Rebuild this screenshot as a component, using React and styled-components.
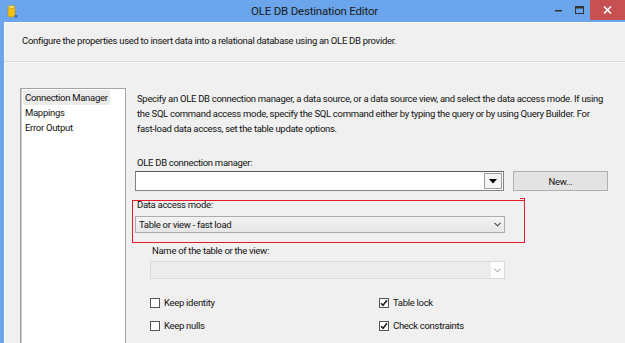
import React from 'react'
import styled, { createGlobalStyle } from 'styled-components';

const Global = createGlobalStyle`
   body {
      margin: 0;
      font-family: Roboto, "Liberation Sans", sans-serif;
      color: #111;
   }
`

const Window = styled.div`
   width: 625px;
   height: 343px;
   overflow: hidden;
   display: flex;
   flex-direction: column;
   background: #f0f0f0;
   font-size: 9.5px;
   letter-spacing: -0.3px;
`

const TitleBar = styled.div`
   height: 22px;
   flex: none;
   display: grid;
   grid-template-columns: 1fr auto 1fr;
   align-items: center;
   background: #6ba6ec;
`

const TitleIcon = styled.div`
   padding-left: 7px;
   display: flex;
   align-items: center;
`

const Title = styled.div`
   font-size: 11.5px;
   letter-spacing: -0.2px;
   color: #1a1a1a;
   padding-left: 4px;
`

const Controls = styled.div`
   display: flex;
   justify-content: flex-end;
   align-self: start;
`

const CtrlButton = styled.div`
   width: ${({ wide }) => (wide ? '35px' : '21px')};
   height: 20px;
   display: flex;
   align-items: center;
   justify-content: center;
   background: ${({ danger }) => (danger ? '#c75050' : 'transparent')};
`

const Frame = styled.div`
   flex: 1;
   min-height: 0;
   display: flex;
   flex-direction: column;
   border-left: 4px solid #6ba6ec;
   box-shadow: inset 1px 1px 0 #fbfbfb;
`

const Header = styled.div`
   height: 40px;
   flex: none;
   box-sizing: border-box;
   padding: 11px 0 0 18px;
   line-height: 15px;
   border-bottom: 1px solid #d8d8d8;
`

const Main = styled.div`
   flex: 1;
   min-height: 0;
   display: flex;
   padding: 25px 0 0 16px;
   border-top: 1px solid #fafafa;
`

const Nav = styled.div`
   width: 106px;
   box-sizing: border-box;
   height: 300px;
   flex: none;
   display: flex;
   flex-direction: column;
   align-items: flex-start;
   padding: 1px 2px;
   background: #fff;
   border: 1px solid #a3a3a3;
   box-shadow: inset 1px 0 0 #c9c9c9;
`

const NavItem = styled.div`
   padding: 0 2px;
   line-height: 15px;
   white-space: nowrap;
   background: ${({ active }) => (active ? '#ececec' : 'transparent')};
`

const Content = styled.div`
   margin-left: 6px;
   padding-top: 3px;
   display: flex;
   flex-direction: column;
   align-items: flex-start;
`

const Description = styled.div`
   padding-left: 5px;
   line-height: 15px;
   white-space: nowrap;
`

const Line = styled.span`
   display: block;
`

const Label = styled.div`
   margin-top: ${({ top }) => top || 0}px;
   padding-left: ${({ indent }) => indent || 5}px;
   line-height: 15px;
   white-space: nowrap;
`

const ComboRow = styled.div`
   margin: 1px 0 0 3px;
   display: flex;
   align-items: center;
`

const Combo = styled.div`
   width: 369px;
   height: 20px;
   box-sizing: border-box;
   display: flex;
   justify-content: flex-end;
   align-items: center;
   padding-right: 1px;
   background: #fff;
   border: 1px solid #828282;
   border-top-color: #5a5a5a;
`

const DropButton = styled.div`
   width: 18px;
   height: 16px;
   box-sizing: border-box;
   display: flex;
   align-items: center;
   justify-content: center;
   background: #f4f4f4;
   border: 1px solid #9c9c9c;
`

const Button = styled.div`
   margin-left: 9px;
   width: 95px;
   height: 20px;
   box-sizing: border-box;
   display: flex;
   align-items: center;
   justify-content: center;
   background: #e3e3e3;
   border: 1px solid #b0b0b0;
`

const Group = styled.div`
   margin-top: 9px;
   width: 393px;
   box-sizing: border-box;
   padding-bottom: 9px;
   border: 1px solid #e31b2a;
   position: relative;

   &::after {
      content: '';
      position: absolute;
      right: -1px;
      top: -3px;
      width: 5px;
      height: 3px;
      border-top: 1px solid #e31b2a;
      border-right: 1px solid #e31b2a;
      box-sizing: border-box;
   }
`

const GroupLabel = styled.div`
   margin-top: -2px;
   padding-left: 4px;
   line-height: 12px;
`

const Select = styled.div`
   margin: ${({ disabled }) => (disabled ? '3px 0 0 18px' : '5px 0 0 2px')};
   width: ${({ disabled }) => (disabled ? '355px' : '370px')};
   height: ${({ disabled }) => (disabled ? '18px' : '17px')};
   box-sizing: border-box;
   display: flex;
   align-items: center;
   justify-content: space-between;
   padding-left: 3px;
   border: 1px solid ${({ disabled }) => (disabled ? '#dadada' : '#acacac')};
   background: ${({ disabled }) => (disabled ? '#ececec' : 'linear-gradient(#f3f3f3, #e6e6e6)')};
`

const SelectArrow = styled.div`
   width: 13px;
   align-self: stretch;
   display: flex;
   align-items: center;
   justify-content: center;
   background: ${({ disabled }) => (disabled ? '#fdfdfd' : 'transparent')};
`

const Checks = styled.div`
   margin: 16px 0 0 18px;
   display: grid;
   grid-template-columns: 229px 140px;
   row-gap: 8px;
`

const CheckItem = styled.label`
   display: flex;
   align-items: center;
   gap: 4px;
   line-height: 15px;
`

const Box = styled.span`
   width: 10px;
   height: 10px;
   box-sizing: border-box;
   display: flex;
   align-items: center;
   justify-content: center;
   background: #fff;
   border: 1px solid #555;
`

const Chevron = ({ color }) => (
   <svg width="7" height="5" viewBox="0 0 7 5">
      <path d="M0.5 0.8 L3.5 3.8 L6.5 0.8" fill="none" stroke={color} strokeWidth="1.1" />
   </svg>
)

const Check = ({ label, checked }) => (
   <CheckItem>
      <Box>
         {checked && (
            <svg width="8" height="8" viewBox="0 0 8 8">
               <path d="M1 4.2 L3 6.3 L7 1.3" fill="none" stroke="#222" strokeWidth="1.6" />
            </svg>
         )}
      </Box>
      {label}
   </CheckItem>
)

const App = () => {
   return (
      <>
         <Global />
         <Window>
            <TitleBar>
               <TitleIcon>
                  <svg width="11" height="13" viewBox="0 0 11 13">
                     <path d="M1 2 L1 10.5 A3.5 1.5 0 0 0 8 10.5 L8 2 Z" fill="#f2c21b" stroke="#b8900e" strokeWidth="0.7" />
                     <ellipse cx="4.5" cy="2" rx="3.5" ry="1.4" fill="#fbe27a" stroke="#b8900e" strokeWidth="0.7" />
                     <rect x="7.5" y="10" width="3" height="2.5" fill="#3a6ab8" />
                  </svg>
               </TitleIcon>
               <Title>OLE DB Destination Editor</Title>
               <Controls>
                  <CtrlButton>
                     <svg width="8" height="4" viewBox="0 0 8 4"><rect x="0" y="2" width="7" height="1.5" fill="#333" /></svg>
                  </CtrlButton>
                  <CtrlButton>
                     <svg width="9" height="8" viewBox="0 0 9 8">
                        <rect x="0.5" y="0.5" width="8" height="7" fill="none" stroke="#333" />
                        <rect x="0.5" y="0.5" width="8" height="2" fill="#333" />
                     </svg>
                  </CtrlButton>
                  <CtrlButton wide danger>
                     <svg width="9" height="8" viewBox="0 0 9 8">
                        <path d="M1 0.5 L8 7.5 M8 0.5 L1 7.5" stroke="#fff" strokeWidth="1.6" />
                     </svg>
                  </CtrlButton>
               </Controls>
            </TitleBar>
            <Frame>
               <Header>
                  Configure the properties used to insert data into a relational database using an OLE DB provider.
               </Header>
               <Main>
                  <Nav>
                     <NavItem active>Connection Manager</NavItem>
                     <NavItem>Mappings</NavItem>
                     <NavItem>Error Output</NavItem>
                  </Nav>
                  <Content>
                     <Description>
                        <Line>Specify an OLE DB connection manager, a data source, or a data source view, and select the data access mode. If using</Line>
                        <Line>the SQL command access mode, specify the SQL command either by typing the query or by using Query Builder. For</Line>
                        <Line>fast-load data access, set the table update options.</Line>
                     </Description>
                     <Label top={19}>OLE DB connection manager:</Label>
                     <ComboRow>
                        <Combo>
                           <DropButton>
                              <svg width="8" height="5" viewBox="0 0 8 5"><path d="M0 0 L8 0 L4 4.5 Z" fill="#000" /></svg>
                           </DropButton>
                        </Combo>
                        <Button>New...</Button>
                     </ComboRow>
                     <Group>
                        <GroupLabel>Data access mode:</GroupLabel>
                        <Select>
                           Table or view - fast load
                           <SelectArrow><Chevron color="#444" /></SelectArrow>
                        </Select>
                     </Group>
                     <Label indent={20}>Name of the table or the view:</Label>
                     <Select disabled>
                        <span />
                        <SelectArrow disabled><Chevron color="#b5b5b5" /></SelectArrow>
                     </Select>
                     <Checks>
                        <Check label="Keep identity" />
                        <Check label="Table lock" checked />
                        <Check label="Keep nulls" />
                        <Check label="Check constraints" checked />
                     </Checks>
                  </Content>
               </Main>
            </Frame>
         </Window>
      </>
   )
}

export default App
